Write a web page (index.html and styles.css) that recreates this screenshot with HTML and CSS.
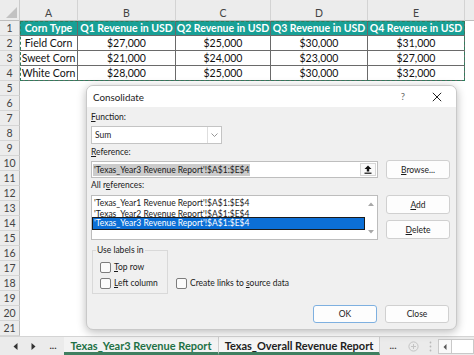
FILE: index.html
```html
<!DOCTYPE html>
<html>
<head>
<meta charset="utf-8">
<title>Consolidate</title>
<link rel="stylesheet" href="styles.css">
</head>
<body>
<div class="app">
  <div class="sheet">
    <div class="corner"><span class="tri"></span></div>
    <div class="colh">A</div>
    <div class="colh">B</div>
    <div class="colh">C</div>
    <div class="colh">D</div>
    <div class="colh">E</div>
    <div class="colh colh-f"></div>

    <div class="rowh">1</div>
    <div class="rowh">2</div>
    <div class="rowh">3</div>
    <div class="rowh">4</div>

    <div class="table">
      <div class="c th">Corn Type</div>
      <div class="c th">Q1 Revenue in USD</div>
      <div class="c th">Q2 Revenue in USD</div>
      <div class="c th">Q3 Revenue in USD</div>
      <div class="c th">Q4 Revenue in USD</div>

      <div class="c">Field Corn</div>
      <div class="c">$27,000</div>
      <div class="c">$25,000</div>
      <div class="c">$30,000</div>
      <div class="c">$31,000</div>

      <div class="c">Sweet Corn</div>
      <div class="c">$21,000</div>
      <div class="c">$24,000</div>
      <div class="c">$23,000</div>
      <div class="c">$27,000</div>

      <div class="c">White Corn</div>
      <div class="c">$28,000</div>
      <div class="c">$25,000</div>
      <div class="c">$30,000</div>
      <div class="c">$32,000</div>
    </div>

    <div class="rowh">5</div>
    <div class="rowh">6</div>
    <div class="rowh">7</div>
    <div class="rowh">8</div>
    <div class="rowh">9</div>
    <div class="rowh">10</div>
    <div class="rowh">11</div>
    <div class="rowh">12</div>
    <div class="rowh">13</div>
    <div class="rowh">14</div>
    <div class="rowh">15</div>
    <div class="rowh">16</div>
    <div class="rowh">17</div>
    <div class="rowh">18</div>
    <div class="rowh">19</div>
    <div class="rowh">20</div>
    <div class="rowh">21</div>
  </div>

  <div class="tabs">
    <span class="nav"><svg width="5" height="7" viewBox="0 0 5 7"><polygon points="4.5,0 4.5,7 0.5,3.5" fill="#333"/></svg></span>
    <span class="nav"><svg width="5" height="7" viewBox="0 0 5 7"><polygon points="0.5,0 0.5,7 4.5,3.5" fill="#333"/></svg></span>
    <span class="dots">...</span>
    <span class="tab active">Texas_Year3 Revenue Report</span>
    <span class="tab second">Texas_Overall Revenue Report</span>
    <span class="dots dots-r">...</span>
    <span class="add-sheet"><svg width="11" height="11" viewBox="0 0 11 11"><circle cx="5.5" cy="5.5" r="4.6" fill="none" stroke="#c4c4c4" stroke-width="1"/><path d="M5.5 3v5M3 5.5h5" stroke="#c4c4c4" stroke-width="1"/></svg></span>
    <span class="vdots"><svg width="3" height="11" viewBox="0 0 3 11"><circle cx="1.5" cy="1.5" r="0.9" fill="#b8b8b8"/><circle cx="1.5" cy="5.5" r="0.9" fill="#b8b8b8"/><circle cx="1.5" cy="9.5" r="0.9" fill="#b8b8b8"/></svg></span>
    <span class="hs-btn"><svg width="4" height="6" viewBox="0 0 4 6"><polygon points="3.5,0 3.5,6 0.5,3" fill="#555"/></svg></span>
    <span class="hs-track"></span>
  </div>

  <div class="dialog">
    <div class="dlg-title">
      <span class="dlg-name">Consolidate</span>
      <span class="dlg-help">?</span>
      <span class="dlg-close"><svg width="10" height="10" viewBox="0 0 10 10"><path d="M0.8 0.8L9.2 9.2M9.2 0.8L0.8 9.2" stroke="#222" stroke-width="1"/></svg></span>
    </div>
    <div class="dlg-body">
      <div class="lbl"><u>F</u>unction:</div>
      <div class="combo">
        <span class="combo-val">Sum</span>
        <span class="combo-btn"><svg width="7" height="4" viewBox="0 0 7 4"><path d="M0.5 0.5L3.5 3.5L6.5 0.5" fill="none" stroke="#8a8a8a" stroke-width="0.9"/></svg></span>
      </div>
      <div class="lbl lbl-ref"><u>R</u>eference:</div>
      <div class="ref-row">
        <div class="refedit">
          <span class="ref-text"><span class="ref-sel">'Texas_Year3 Revenue Report'!$A$1:$E$4</span></span>
          <span class="collapse"><svg width="8" height="9" viewBox="0 0 8 9"><path d="M4 0.5L7.5 4H5.2V6.5H2.8V4H0.5Z" fill="#111"/><rect x="0.5" y="7.6" width="7" height="1.2" fill="#111"/></svg></span>
        </div>
        <button class="btn"><u>B</u>rowse...</button>
      </div>
      <div class="lbl">All r<u>e</u>ferences:</div>
      <div class="list-row">
        <div class="listbox">
          <div class="items">
            <div class="item">'Texas_Year1 Revenue Report'!$A$1:$E$4</div>
            <div class="item">'Texas_Year2 Revenue Report'!$A$1:$E$4</div>
            <div class="item selected">'Texas_Year3 Revenue Report'!$A$1:$E$4</div>
          </div>
          <div class="vscroll">
            <svg width="6" height="4" viewBox="0 0 6 4"><polygon points="0,4 6,4 3,0.5" fill="#a8a8a8"/></svg>
            <svg width="6" height="4" viewBox="0 0 6 4"><polygon points="0,0 6,0 3,3.5" fill="#a8a8a8"/></svg>
          </div>
        </div>
        <div class="side-btns">
          <button class="btn"><u>A</u>dd</button>
          <button class="btn"><u>D</u>elete</button>
        </div>
      </div>
      <div class="opts-row">
        <fieldset class="group">
          <legend>Use labels in</legend>
          <label class="chk"><span class="box"></span><span><u>T</u>op row</span></label>
          <label class="chk"><span class="box"></span><span><u>L</u>eft column</span></label>
        </fieldset>
        <label class="chk links"><span class="box"></span><span>Create links to <u>s</u>ource data</span></label>
      </div>
      <div class="foot">
        <button class="btn default">OK</button>
        <button class="btn">Close</button>
      </div>
    </div>
  </div>
</div>
</body>
</html>
```

FILE: styles.css
```css
* { box-sizing: border-box; margin: 0; padding: 0; }
html, body { width: 474px; height: 355px; overflow: hidden; background: #fff; }
body { font-family: Lato, "Liberation Sans", sans-serif; color: #151515; }

.app { position: relative; width: 474px; height: 355px; display: flex; flex-direction: column; }

/* ---------- sheet ---------- */
.sheet {
  display: grid;
  grid-template-columns: 20px 58px 98px 95px 97px 97px 1fr;
  grid-template-rows: 21px repeat(21, 15px);
  height: 336px;
  font-size: 10.5px;
}
.corner {
  background: #ececec;
  border-right: 1px solid #cbcbcb;
  border-bottom: 1px solid #bdbdbd;
  display: flex; align-items: flex-end; justify-content: flex-end;
  padding: 0 2px 2px 0;
}
.tri { width: 0; height: 0; border-left: 11px solid transparent; border-bottom: 11px solid #c2c2c2; }
.colh {
  background: #ececec;
  border-right: 1px solid #d3d3d3;
  border-bottom: 1px solid #bdbdbd;
  color: #444;
  display: flex; justify-content: center; align-items: center;
  padding-top: 6px;
}
.colh-f { border-right: none; }
.rowh {
  grid-column: 1;
  background: #ececec;
  border-right: 1px solid #bdbdbd;
  border-bottom: 1px solid #d6d6d6;
  color: #444;
  display: flex; justify-content: center; align-items: center;
}
.table {
  grid-column: 2 / 7;
  grid-row: 2 / 6;
  display: grid;
  grid-template-columns: 58px 98px 95px 97px 97px;
  grid-template-rows: repeat(4, 15px);
  outline: 1px dashed #2f7d5c;
  outline-offset: -1px;
}
.c {
  display: flex; align-items: center; justify-content: center;
  border-right: 1px solid #6a6a6a;
  border-bottom: 1px solid #6a6a6a;
  white-space: nowrap; overflow: hidden;
  color: #111;
}
.th { background: #18a096; color: #fff; font-weight: 700; }

/* ---------- sheet tabs ---------- */
.tabs {
  height: 19px;
  display: flex; align-items: stretch;
  background: #ebebeb;
  border-top: 1px solid #d4d4d4;
  font-size: 11px;
}
.nav { width: 18px; display: flex; align-items: center; justify-content: center; }
.nav:first-child { margin-left: 6px; }
.dots { width: 22px; display: flex; align-items: center; justify-content: center; color: #333; font-weight: 700; font-size: 10px; padding-bottom: 3px; }
.tab {
  display: flex; align-items: center; justify-content: center;
  font-weight: 700; white-space: nowrap;
  border-bottom: 3px solid #3f7f60;
  padding-top: 2px;
}
.active { width: 154px; color: #1e7145; background: #f3f3f3; }
.second { width: 162px; color: #222; background: #f6f6f6; border-left: 1px solid #cfcfcf; border-right: 1px solid #cfcfcf; }
.dots-r { width: 24px; margin-left: 1px; color: #444; }
.add-sheet { width: 17px; display: flex; align-items: center; justify-content: center; }
.vdots { width: 16px; display: flex; align-items: center; justify-content: center; }
.hs-btn {
  width: 14px; margin: 2px 0 1px;
  display: flex; align-items: center; justify-content: center;
  border: 1px solid #c9c9c9; background: #f9f9f9;
}
.hs-track { flex: 1; margin: 2px 0 1px; background: #fff; border: 1px solid #c9c9c9; border-left: none; }

/* ---------- dialog ---------- */
.dialog {
  position: absolute;
  left: 86px; top: 85px;
  width: 371px; height: 245px;
  border-radius: 7px;
  background: #f0f0f0;
  border: 1px solid #c9c9c9;
  box-shadow: 0 2px 10px rgba(0,0,0,0.28);
  overflow: hidden;
  font-size: 8.5px;
  color: #1a1a1a;
  display: flex; flex-direction: column;
}
.dlg-title {
  height: 22px;
  background: #fff;
  display: flex; align-items: center;
  padding-left: 6px;
}
.dlg-name { flex: 1; font-size: 9.8px; color: #222; }
.dlg-help { width: 14px; text-align: center; color: #6a6a6a; font-size: 9.5px; margin-right: 20px; }
.dlg-close { width: 14px; display: flex; justify-content: center; margin-right: 12px; }

.dlg-body { flex: 1; padding: 4px 6px 6px 4px; display: flex; flex-direction: column; }
.lbl { line-height: 13px; height: 13px; }
.lbl-ref { margin-top: 2px; }
u { text-decoration-thickness: 0.6px; text-underline-offset: 1px; }

.combo {
  margin-top: 2px;
  width: 131px; height: 18px;
  background: #fff; border: 1px solid #c4c4c4;
  display: flex; align-items: stretch;
}
.combo-val { flex: 1; display: flex; align-items: center; padding-left: 3px; }
.combo-btn { width: 14px; border-left: 1px solid #dedede; display: flex; align-items: center; justify-content: center; }

.ref-row { margin-top: 1px; height: 19px; display: flex; align-items: center; gap: 8px; }
.refedit {
  width: 287px; height: 17px;
  background: #fff; border: 1px solid #bebebe;
  display: flex; align-items: stretch;
}
.ref-text { flex: 1; display: flex; align-items: center; padding-left: 1px; overflow: hidden; white-space: nowrap; }
.ref-sel { background: #cbcbcb; line-height: 12px; padding: 0 1px; }
.collapse {
  width: 16px; margin: 1px;
  border: 1px solid #d6d6d6; background: #fafafa;
  display: flex; align-items: center; justify-content: center;
}

.btn {
  width: 64px; height: 19px;
  font: inherit; color: #1a1a1a;
  background: #fdfdfd;
  border: 1px solid #d0d0d0;
  border-radius: 3px;
}

.list-row { margin-top: 3px; display: flex; gap: 8px; }
.listbox {
  width: 287px; height: 45px;
  background: #fff; border: 1px solid #bdbdbd;
  display: flex;
}
.items { flex: 1; padding-top: 2px; }
.item { line-height: 11px; height: 11px; padding-left: 2px; white-space: nowrap; overflow: hidden; }
.item.selected {
  position: relative;
  margin-top: -3px; height: 13px;
  background: #0c6fd6; color: #fff;
  border: 1px solid #1b1b1b;
  padding-left: 1px;
}
.vscroll { width: 12px; display: flex; flex-direction: column; justify-content: space-between; align-items: center; padding: 6px 0 5px; }
.side-btns { display: flex; flex-direction: column; gap: 6px; }

.opts-row { margin-top: 4px; display: flex; align-items: flex-end; gap: 8px; }
.group {
  margin-left: 1px;
  width: 76px; height: 50px;
  border: 1px solid #d9d9d9;
  padding: 4px 2px 3px 7px;
  display: flex; flex-direction: column; gap: 2px;
}
.group legend { margin-left: -4px; padding: 0 1px; line-height: 12px; }
.chk { display: flex; align-items: center; gap: 3px; height: 14px; white-space: nowrap; }
.box { width: 11px; height: 11px; border: 1px solid #7d7d7d; border-radius: 2px; background: #fbfbfb; }
.links { margin-bottom: 4px; }

.foot { margin-top: 11px; display: flex; justify-content: flex-end; gap: 8px; padding-right: 1px; }
.foot .btn { height: 18px; }
.btn.default { border-color: #7eb0e0; }
```
